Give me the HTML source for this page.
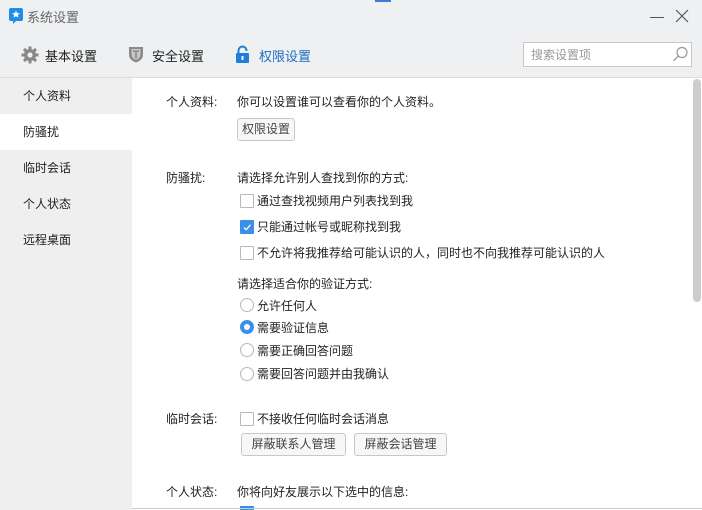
<!DOCTYPE html>
<html><head><meta charset="utf-8"><style>
*{margin:0;padding:0;box-sizing:border-box}
body{width:702px;height:510px;overflow:hidden;background:#fff;font-family:"Liberation Sans","Noto Sans CJK SC",sans-serif;font-size:12px;color:#222;position:relative}
.a{position:absolute;white-space:nowrap}
.cb{position:absolute;width:14px;height:14px;border:1px solid #b8b8b8;background:#fff;border-radius:1px}
.cb.on{background:#3d8ee8;border-color:#3d8ee8}
.rd{position:absolute;width:14px;height:14px;border:1px solid #b8b8b8;border-radius:50%;background:#fff}
.rd.on{border:4px solid #3d8ee8}
.btn{position:absolute;height:23px;border:1px solid #c8c8c8;border-radius:3px;background:#f7f7f7;color:#444;line-height:21px;text-align:center}
.side{position:absolute;left:23px;font-size:12px}
</style></head><body>
<div class="a" style="left:0;top:0;width:702px;height:78px;background:#eff0f2"></div>
<div class="a" style="left:0;top:77px;width:702px;height:1px;background:#dcdcdc"></div>
<div class="a" style="left:375px;top:0;width:16px;height:2px;background:#3d7dd8"></div>
<svg class="a" style="left:9px;top:8px" width="14" height="16" viewBox="0 0 14 16"><path d="M2 0h10a2 2 0 0 1 2 2v9a2 2 0 0 1-2 2H7l-3 3v-3H2a2 2 0 0 1-2-2V2a2 2 0 0 1 2-2z" fill="#1e8ce8"/><path d="M7 2.5l1.1 2.6 2.8.2-2.1 1.8.7 2.7L7 8.3 4.5 9.8l.7-2.7-2.1-1.8 2.8-.2z" fill="#fff"/></svg>
<div class="a" style="left:27px;top:7px;color:#666;font-size:13px">系统设置</div>
<div class="a" style="left:650px;top:17px;width:14px;height:1px;background:#555"></div>
<svg class="a" style="left:675px;top:9px" width="14" height="14"><path d="M1 1L13 13M13 1L1 13" stroke="#555" stroke-width="1.2"/></svg>
<svg class="a" style="left:21px;top:46px" width="18" height="18" viewBox="0 0 18 18"><g fill="#888"><circle cx="9" cy="9" r="6"/><rect x="7.5" y="0.5" width="3" height="17"/><rect x="0.5" y="7.5" width="17" height="3"/><rect x="7.5" y="0.5" width="3" height="17" transform="rotate(45 9 9)"/><rect x="7.5" y="0.5" width="3" height="17" transform="rotate(-45 9 9)"/></g><circle cx="9" cy="9" r="2.6" fill="#eff0f2"/></svg>
<div class="a" style="left:45px;top:46px;font-size:13px;color:#222">基本设置</div>
<svg class="a" style="left:128px;top:46px" width="16" height="17" viewBox="0 0 16 17"><path d="M1 1h14v8c0 4-4 6.5-7 7.5C5 15.5 1 13 1 9z" fill="#8a8a8a"/><path d="M3.5 3h9v5.5c0 3-2.5 4.5-4.5 5.3C6 13 3.5 11.5 3.5 8.5z" fill="#c8c8c8"/><path d="M5 4.5h6v1.5H8.8v6H7.2V6H5z" fill="#8a8a8a"/></svg>
<div class="a" style="left:152px;top:46px;font-size:13px;color:#222">安全设置</div>
<svg class="a" style="left:235px;top:45px" width="15" height="18" viewBox="0 0 15 18"><path d="M3.5 8V5.5a4 4 0 0 1 8 0V6" fill="none" stroke="#1e7fd8" stroke-width="2"/><rect x="1" y="8" width="13" height="10" rx="1" fill="#1e7fd8"/><rect x="6.5" y="11" width="2" height="4" fill="#fff"/></svg>
<div class="a" style="left:259px;top:46px;font-size:13px;color:#1e6fc0">权限设置</div>
<div class="a" style="left:523px;top:42px;width:169px;height:25px;border:1px solid #c8c8c8;background:#fff"></div>
<div class="a" style="left:531px;top:46px;color:#999">搜索设置项</div>
<svg class="a" style="left:672px;top:46px" width="16" height="16"><circle cx="10" cy="6.5" r="5" fill="none" stroke="#999" stroke-width="1.2"/><path d="M6.3 10L1.5 14.8" stroke="#999" stroke-width="1.3"/></svg>
<div class="a" style="left:0;top:78px;width:132px;height:432px;background:#efefef"></div>
<div class="a" style="left:0;top:114px;width:132px;height:36px;background:#fff"></div>
<div class="side a" style="top:87px">个人资料</div>
<div class="side a" style="top:123px">防骚扰</div>
<div class="side a" style="top:159px">临时会话</div>
<div class="side a" style="top:195px">个人状态</div>
<div class="side a" style="top:231px">远程桌面</div>
<div class="a" style="left:166px;top:93px">个人资料:</div>
<div class="a" style="left:237px;top:93px">你可以设置谁可以查看你的个人资料。</div>
<div class="btn" style="left:237px;top:118px;width:58px">权限设置</div>
<div class="a" style="left:166px;top:169px">防骚扰:</div>
<div class="a" style="left:237px;top:169px">请选择允许别人查找到你的方式:</div>
<div class="cb" style="left:240px;top:194px"></div><div class="a" style="left:257px;top:192px">通过查找视频用户列表找到我</div>
<div class="cb on" style="left:240px;top:220px"><svg width="12" height="12" style="position:absolute;left:0;top:0"><path d="M3 6.5l2.2 2.2L9.5 3.8" fill="none" stroke="#fff" stroke-width="1.3"/></svg></div><div class="a" style="left:257px;top:218px">只能通过帐号或昵称找到我</div>
<div class="cb" style="left:240px;top:246px"></div><div class="a" style="left:257px;top:244px">不允许将我推荐给可能认识的人，同时也不向我推荐可能认识的人</div>
<div class="a" style="left:237px;top:275px">请选择适合你的验证方式:</div>
<div class="rd" style="left:240px;top:298px"></div><div class="a" style="left:257px;top:297px">允许任何人</div>
<div class="rd on" style="left:240px;top:320px"></div><div class="a" style="left:257px;top:319px">需要验证信息</div>
<div class="rd" style="left:240px;top:343px"></div><div class="a" style="left:257px;top:342px">需要正确回答问题</div>
<div class="rd" style="left:240px;top:367px"></div><div class="a" style="left:257px;top:365px">需要回答问题并由我确认</div>
<div class="a" style="left:166px;top:410px">临时会话:</div>
<div class="cb" style="left:240px;top:412px"></div><div class="a" style="left:257px;top:410px">不接收任何临时会话消息</div>
<div class="btn" style="left:241px;top:433px;width:105px">屏蔽联系人管理</div>
<div class="btn" style="left:354px;top:433px;width:93px">屏蔽会话管理</div>
<div class="a" style="left:166px;top:483px">个人状态:</div>
<div class="a" style="left:237px;top:483px">你将向好友展示以下选中的信息:</div>
<div class="a" style="left:240px;top:506px;width:14px;height:4px;background:#3d8ee8"></div>
<div class="a" style="left:132px;top:508px;width:570px;height:1px;background:#ccc"></div>
<div class="a" style="left:693px;top:79px;width:8px;height:223px;background:#cdcdcd;border-radius:4px"></div>
</body></html>
